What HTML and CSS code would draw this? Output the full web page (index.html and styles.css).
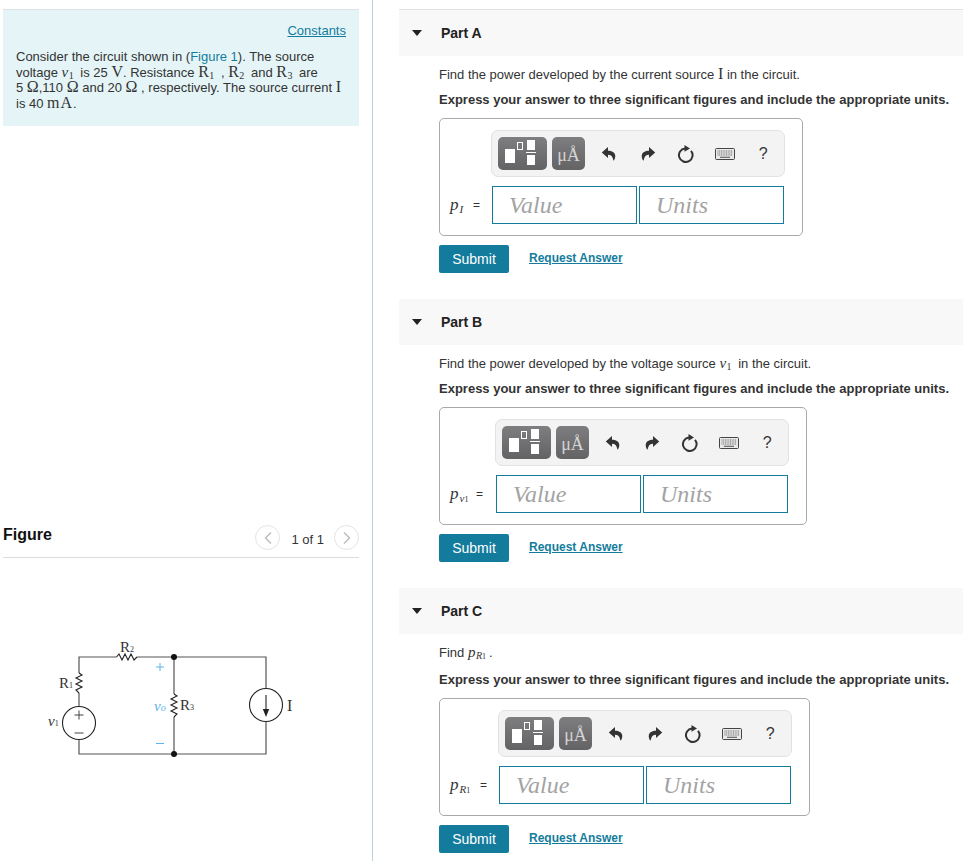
FILE: index.html
```html
<!DOCTYPE html>
<html lang="en">
<head>
<meta charset="utf-8">
<title>Circuit problem</title>
<link rel="stylesheet" href="styles.css">
</head>
<body>
<svg class="sprites" width="0" height="0" aria-hidden="true">
  <symbol id="ic-template" viewBox="0 0 49 33">
    <rect x="7" y="12" width="10" height="14" fill="#fff"/>
    <rect x="19.5" y="5.5" width="5" height="7" fill="none" stroke="#fff"/>
    <rect x="29" y="3" width="8" height="10" fill="#fff"/>
    <rect x="28" y="15" width="10" height="1" fill="#fff"/>
    <rect x="29" y="18" width="8" height="10" fill="#fff"/>
  </symbol>
  <symbol id="ic-undo" viewBox="0 0 16 16">
    <path d="M7 1 .8 6.500 7 12V8.800c2.600 0 3.900 1 4.600 3 .3.900.6 1.900.9 3 1.200-1.300 2.100-3.300 1.700-5.500C13.700 6.300 11 4.800 7 4.800z" fill="#333"/>
  </symbol>
  <symbol id="ic-redo" viewBox="0 0 16 16">
    <path d="M9 1l6.200 5.500L9 12V8.800c-2.600 0-3.900 1-4.600 3-.3.900-.6 1.900-.9 3-1.200-1.300-2.100-3.300-1.700-5.500C2.300 6.300 5 4.800 9 4.800z" fill="#333"/>
  </symbol>
  <symbol id="ic-reset" viewBox="0 0 18 18">
    <path d="M14 5.800a6.800 6.800 0 1 1-6-2.400" fill="none" stroke="#333" stroke-width="2"/>
    <path d="M7.500 0 13 3.400 7.500 6.800z" fill="#333"/>
  </symbol>
  <symbol id="ic-keyboard" viewBox="0 0 20 12">
    <rect x=".5" y=".5" width="19" height="11" rx="1" fill="#e9e9e9" stroke="#444"/>
    <path d="M2.500 3h15M2.500 5h15M2.500 7h15" stroke="#666" stroke-dasharray="1 .7" fill="none"/>
    <path d="M5 9.300h10" stroke="#666" stroke-width="1.200"/>
  </symbol>
</svg>

<div class="page">
  <aside class="left">
    <section class="intro">
      <p class="constants"><a href="#">Constants</a></p>
      <p class="statement">Consider the circuit shown in (<a href="#" class="figlink">Figure 1</a>). The source<br>
      voltage <span class="mi"><i>v</i><sub>1</sub></span> is 25 <span class="mr">V</span>. Resistance <span class="mr">R<sub>1</sub></span> , <span class="mr">R<sub>2</sub></span> and <span class="mr">R<sub>3</sub></span> are<br>
      5 <span class="mr">Ω</span>,110 <span class="mr">Ω</span> and 20 <span class="mr">Ω</span> , respectively. The source current <span class="mr">I</span><br>
      is 40 <span class="mr mr-wide">mA</span>.</p>
    </section>
    <header class="fig-head">
      <h2>Figure</h2>
      <nav class="pager">
        <span class="pager-btn"><svg width="10" height="14" viewBox="0 0 10 14"><path d="M8 1.500 2.500 7 8 12.500" fill="none" stroke="#bdbdbd" stroke-width="1.500"/></svg></span>
        <span class="pager-text">1 of 1</span>
        <span class="pager-btn"><svg width="10" height="14" viewBox="0 0 10 14"><path d="M2 1.500 7.500 7 2 12.500" fill="none" stroke="#bdbdbd" stroke-width="1.500"/></svg></span>
      </nav>
    </header>
    <svg class="circuit" width="356" height="220" viewBox="3 558 356 220">
      <g fill="none" stroke="#555" stroke-width="1.200">
        <path d="M116.500 657H79V673M79 693V706.500M79 739.500V754H266V721.500M266 688.500V657H137"/>
        <path d="M174 657V694M174 717V754"/>
      </g>
      <g fill="none" stroke="#222" stroke-width="1.100">
        <path d="M116.500 657 119 654 122 660 125 654 128 660 131 654 134 660 137 657"/>
        <path d="M79 673 82 675 76 678 82 681 76 684 82 687 76 690 79 693"/>
        <path d="M174 694 177 696 171 699 177 702 171 705 177 708 171 711 177 714 174 717"/>
        <circle cx="79" cy="723" r="16.500"/>
        <circle cx="266" cy="705" r="16.500"/>
        <path d="M266 695V711"/>
      </g>
      <path d="M262.800 709H269.200L266 717z" fill="#222"/>
      <circle cx="174" cy="657" r="3" fill="#111"/>
      <circle cx="174" cy="754" r="3" fill="#111"/>
      <path d="M74.500 715H83.500M79 710.500V719.500M74.500 733H83.500" stroke="#444" fill="none"/>
      <path d="M156 667H164M160 663V671M156 743.500H164" stroke="#5ab4ec" fill="none"/>
      <g class="cl">
        <text x="120" y="652">R<tspan class="cs">2</tspan></text>
        <text x="59" y="688">R<tspan class="cs">1</tspan></text>
        <text x="48" y="726" font-style="italic">v<tspan class="cs" font-style="normal">1</tspan></text>
        <text x="180" y="710">R<tspan class="cs">3</tspan></text>
        <text x="287" y="711" class="cb">I</text>
        <text x="154" y="711" class="cv" font-style="italic">v<tspan class="cs">o</tspan></text>
      </g>
    </svg>
  </aside>

  <main class="right">
    <section class="part part-first">
      <header class="part-head"><span class="caret"></span><h3>Part A</h3></header>
      <div class="part-body">
        <p class="ask">Find the power developed by the current source <span class="mr">I</span> in the circuit.</p>
        <p class="express">Express your answer to three significant figures and include the appropriate units.</p>
        <div class="answer">
          <div class="toolbar">
            <span class="tbtn tbtn-wide"><svg width="49" height="33"><use href="#ic-template"/></svg></span>
            <span class="tbtn tbtn-unit">μÅ</span>
            <span class="tool"><svg width="16" height="16"><use href="#ic-undo"/></svg></span>
            <span class="tool"><svg width="16" height="16"><use href="#ic-redo"/></svg></span>
            <span class="tool"><svg width="18" height="18"><use href="#ic-reset"/></svg></span>
            <span class="tool"><svg width="20" height="12"><use href="#ic-keyboard"/></svg></span>
            <span class="tool tool-help">?</span>
          </div>
          <label class="var var-a"><span class="mi"><i>p</i><sub><i>I</i></sub></span> <span class="eq">=</span></label>
          <div class="fields"><span class="field">Value</span><span class="field">Units</span></div>
        </div>
        <div class="actions"><button class="submit">Submit</button><a class="reveal" href="#">Request Answer</a></div>
      </div>
    </section>

    <section class="part">
      <header class="part-head"><span class="caret"></span><h3>Part B</h3></header>
      <div class="part-body">
        <p class="ask">Find the power developed by the voltage source <span class="mi"><i>v</i><sub>1</sub></span> in the circuit.</p>
        <p class="express">Express your answer to three significant figures and include the appropriate units.</p>
        <div class="answer">
          <div class="toolbar">
            <span class="tbtn tbtn-wide"><svg width="49" height="33"><use href="#ic-template"/></svg></span>
            <span class="tbtn tbtn-unit">μÅ</span>
            <span class="tool"><svg width="16" height="16"><use href="#ic-undo"/></svg></span>
            <span class="tool"><svg width="16" height="16"><use href="#ic-redo"/></svg></span>
            <span class="tool"><svg width="18" height="18"><use href="#ic-reset"/></svg></span>
            <span class="tool"><svg width="20" height="12"><use href="#ic-keyboard"/></svg></span>
            <span class="tool tool-help">?</span>
          </div>
          <label class="var var-b"><span class="mi"><i>p</i><sub><i>v</i><small>1</small></sub></span> <span class="eq">=</span></label>
          <div class="fields"><span class="field">Value</span><span class="field">Units</span></div>
        </div>
        <div class="actions"><button class="submit">Submit</button><a class="reveal" href="#">Request Answer</a></div>
      </div>
    </section>

    <section class="part">
      <header class="part-head"><span class="caret"></span><h3>Part C</h3></header>
      <div class="part-body">
        <p class="ask ask-tall">Find <span class="mi"><i>p</i><sub><i>R</i><small>1</small></sub></span>.</p>
        <p class="express">Express your answer to three significant figures and include the appropriate units.</p>
        <div class="answer">
          <div class="toolbar">
            <span class="tbtn tbtn-wide"><svg width="49" height="33"><use href="#ic-template"/></svg></span>
            <span class="tbtn tbtn-unit">μÅ</span>
            <span class="tool"><svg width="16" height="16"><use href="#ic-undo"/></svg></span>
            <span class="tool"><svg width="16" height="16"><use href="#ic-redo"/></svg></span>
            <span class="tool"><svg width="18" height="18"><use href="#ic-reset"/></svg></span>
            <span class="tool"><svg width="20" height="12"><use href="#ic-keyboard"/></svg></span>
            <span class="tool tool-help">?</span>
          </div>
          <label class="var var-c"><span class="mi"><i>p</i><sub><i>R</i><small>1</small></sub></span> <span class="eq">=</span></label>
          <div class="fields"><span class="field">Value</span><span class="field">Units</span></div>
        </div>
        <div class="actions"><button class="submit">Submit</button><a class="reveal" href="#">Request Answer</a></div>
      </div>
    </section>
  </main>
</div>
</body>
</html>
```
FILE: styles.css
```css
* { box-sizing: border-box; }
html, body { margin: 0; padding: 0; height: 861px; overflow: hidden; background: #fff; }
body { font-family: "Liberation Sans", Arial, sans-serif; font-size: 13px; color: #333; }
p, h2, h3 { margin: 0; }
a { color: #137c9d; }
.sprites { position: absolute; }

.page { display: flex; height: 861px; }

/* left column */
.left { width: 373px; flex: none; padding: 9px 13px 0 3px; border-right: 1px solid #bdd0e0; }
.intro { height: 117px; border-top: 1px solid #dde3e5; background: #e5f5f7; padding: 13px 13px 0; }
.constants { text-align: right; line-height: 16px; }
.statement { margin-top: 10px; line-height: 15.67px; }
.figlink { text-decoration: none; }
.mr, .mi { font-family: "Liberation Serif", "Times New Roman", serif; font-size: 16px; line-height: 0; color: #333; }
.mi { font-size: 15px; }
.mr-wide { letter-spacing: 1px; }
sub { font-size: 10px; line-height: 0; vertical-align: -2px; padding: 0 3px 0 .5px; }
sub small { font-size: 8px; }

.fig-head { display: flex; justify-content: space-between; align-items: center; height: 32px; margin-top: 400px; border-bottom: 1px solid #dcdcdc; }
.fig-head h2 { font-size: 16px; line-height: 18px; color: #111; font-weight: bold; margin-top: -13px; }
.pager { display: flex; align-items: center; margin-top: -8px; }
.pager-btn { display: flex; align-items: center; justify-content: center; width: 25px; height: 25px; border: 1px solid #e4e4e4; border-radius: 50%; }
.pager-text { margin: 0 10px 0 11px; line-height: 16px; position: relative; top: 2px; }

.circuit { display: block; }
.cl text { font-family: "Liberation Serif", serif; font-size: 15px; fill: #333; }
.cl .cs { font-size: 8px; }
.cl .cb { font-size: 16px; }
.cl .cv { fill: #5ab4ec; font-size: 15px; }
.cl .cv .cs { font-size: 10px; }

/* right column */
.right { flex: 1; min-width: 0; padding: 9px 0 0 26px; }
.part-head { display: flex; align-items: center; height: 46px; background: #f8f8f8; padding-left: 13px; }
.part-first .part-head { height: 47px; border-top: 1px solid #e2e2e2; }
.caret { width: 0; height: 0; border-left: 5px solid transparent; border-right: 5px solid transparent; border-top: 6px solid #222; margin-right: 19px; }
.part-head h3 { font-size: 14px; line-height: 18px; font-weight: bold; color: #222; }
.part-body { padding: 9px 0 26px 40px; }
.ask { height: 20px; line-height: 20px; }
.ask-tall { height: 22px; }
.express { margin-top: 7px; line-height: 16px; font-weight: bold; }

.answer { display: inline-grid; grid-template-columns: auto auto; margin-top: 10px; padding: 11px 17px 11px 10px; border: 1px solid #aaa; border-radius: 5px; vertical-align: top; }
.toolbar { grid-column: 2; display: flex; align-items: center; width: 294px; height: 47px; padding-left: 6px; background: #f3f3f3; border: 1px solid #e2e2e2; border-radius: 7px; }
.tbtn { display: flex; align-items: center; justify-content: center; height: 33px; border-radius: 5px; background: linear-gradient(#7e7e80, #636365); }
.tbtn-wide { width: 49px; }
.tbtn-unit { width: 33px; margin: 0 5px 0 5px; font-family: "Liberation Serif", serif; font-size: 18px; color: #d4d4d4; padding-top: 3px; }
.tool { display: flex; align-items: center; justify-content: center; width: 38.500px; }
.tool-help { font-size: 16px; color: #333; }

.var { grid-column: 1; grid-row: 2; display: flex; align-items: center; justify-content: space-between; margin-top: 9px; padding-right: 11px; white-space: nowrap; }
.var-a { width: 41px; }
.var-b { width: 45px; padding-right: 12px; }
.var-c { width: 48px; padding-right: 11px; }
.var .mi { font-size: 17px; line-height: 18px; }
.var sub { font-size: 11px; padding-right: 0; padding-left: 1px; vertical-align: -3px; }
.eq { font-size: 12px; }
.fields { grid-column: 2; grid-row: 2; display: flex; gap: 2px; margin: 9px 0 0 1px; }
.field { width: 145px; height: 38px; padding-left: 16px; border: 1px solid #137c9d; font-family: "Liberation Serif", serif; font-style: italic; font-size: 24px; line-height: 36px; color: #a3a3a3; }

.actions { display: flex; align-items: center; margin-top: 9px; }
.submit { width: 70px; height: 28px; padding: 0; border: 0; border-radius: 2px; background: #137c9d; color: #fff; font: 14px "Liberation Sans", Arial, sans-serif; }
.reveal { margin: -2px 0 0 20px; font-size: 12px; font-weight: bold; }
```
